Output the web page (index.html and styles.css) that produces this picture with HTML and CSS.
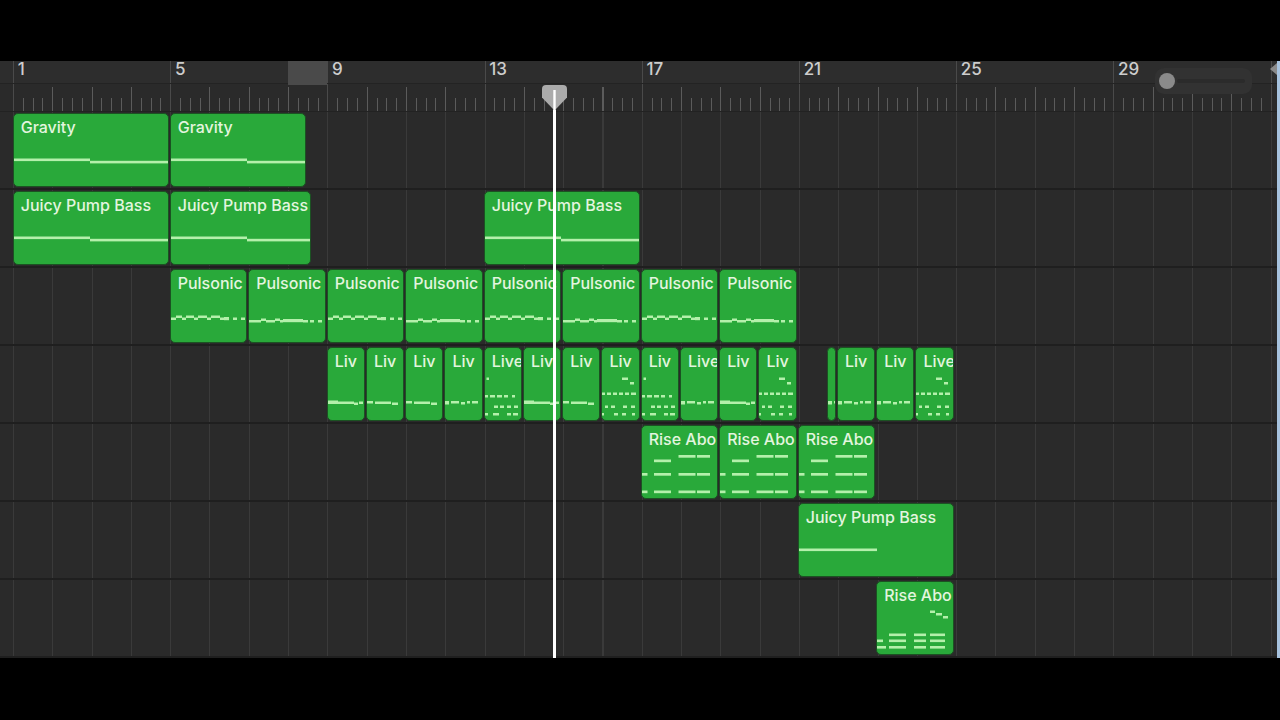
FILE: index.html
```html
<!DOCTYPE html>
<html lang="en">
  <head>
    <meta charset="UTF-8" />
    <title>Arrange</title>
    <link rel="stylesheet" href="styles.css">
  </head>
  <body>
    <!-- note patterns, reused by every region -->
    <svg class="sprites" width="0" height="0">
      <defs>
        <g id="n-bass">
          <rect x="0" y="44.5" width="76" height="2.6"/>
          <rect x="76" y="46.8" width="90" height="2.6"/>
        </g>
        <g id="n-bass-half">
          <rect x="0" y="44.5" width="78" height="2.6"/>
        </g>
        <g id="n-puls-a">
          <rect x="0" y="47.5" width="5" height="2.5"/>
          <rect x="5" y="45.5" width="6" height="2.5"/>
          <rect x="11" y="47.5" width="4" height="2.5"/>
          <rect x="15" y="45.5" width="8" height="2.5"/>
          <rect x="23" y="47.5" width="4" height="2.5"/>
          <rect x="27" y="45.5" width="9" height="2.5"/>
          <rect x="36" y="47.5" width="4" height="2.5"/>
          <rect x="40" y="45.5" width="9" height="2.5"/>
          <rect x="49" y="47.5" width="4" height="2.5"/>
          <rect x="53" y="47" width="5" height="3.2"/>
          <rect x="62" y="47.5" width="4" height="2.5"/>
          <rect x="70" y="47.5" width="4" height="2.5"/>
        </g>
        <g id="n-puls-b">
          <rect x="0" y="50" width="12" height="2.5"/>
          <rect x="12" y="48.5" width="5" height="2.5"/>
          <rect x="17" y="50" width="9" height="2.5"/>
          <rect x="26" y="48.5" width="5" height="2.5"/>
          <rect x="31" y="50" width="3" height="2.5"/>
          <rect x="34" y="49" width="20" height="3.2"/>
          <rect x="54" y="50" width="5" height="2.5"/>
          <rect x="61" y="50" width="4" height="2.5"/>
          <rect x="69" y="50" width="4" height="2.5"/>
        </g>
        <g id="n-liv-a">
          <rect x="0" y="52.5" width="10" height="3.5"/>
          <rect x="10" y="53.5" width="16" height="2.5"/>
          <rect x="26" y="54.5" width="4" height="2.5"/>
          <rect x="31" y="53.5" width="4" height="2.5"/>
        </g>
        <g id="n-liv-b">
          <rect x="0" y="53" width="4" height="3.5"/>
          <rect x="6" y="53" width="8" height="2.5"/>
          <rect x="16" y="54" width="4" height="2.5"/>
          <rect x="22" y="53" width="3" height="2.5"/>
          <rect x="27" y="53" width="6" height="2.5"/>
        </g>
        <g id="n-liv-c">
          <rect x="0" y="53" width="6" height="2.5"/>
          <rect x="8" y="53.5" width="16" height="2.5"/>
          <rect x="25" y="54.5" width="6" height="2.5"/>
        </g>
        <g id="n-multi-a">
          <rect x="1.5" y="29.5" width="2.5" height="2.5"/>
          <rect x="0" y="47" width="3" height="2.5"/>
          <rect x="5" y="47" width="5" height="2.5"/>
          <rect x="12" y="47" width="5" height="2.5"/>
          <rect x="19" y="47" width="4" height="2.5"/>
          <rect x="27" y="47" width="3" height="2.5"/>
          <rect x="9" y="57.5" width="4" height="2.5"/>
          <rect x="15" y="57.5" width="4" height="2.5"/>
          <rect x="22" y="57.5" width="4" height="2.5"/>
          <rect x="29" y="57.5" width="4" height="2.5"/>
          <rect x="0" y="65" width="3" height="2.5"/>
          <rect x="8" y="65" width="6" height="2.5"/>
          <rect x="22" y="65" width="4" height="2.5"/>
          <rect x="28" y="65" width="5" height="2.5"/>
        </g>
        <g id="n-multi-b">
          <rect x="20" y="29.5" width="6" height="2.5"/>
          <rect x="28" y="34" width="4" height="2.5"/>
          <rect x="0" y="44.5" width="3" height="2.5"/>
          <rect x="5" y="44.5" width="4" height="2.5"/>
          <rect x="11" y="44.5" width="4" height="2.5"/>
          <rect x="17" y="44.5" width="4" height="2.5"/>
          <rect x="23" y="44.5" width="4" height="2.5"/>
          <rect x="29" y="44.5" width="5" height="2.5"/>
          <rect x="3" y="57.5" width="3" height="2.5"/>
          <rect x="9" y="57.5" width="4" height="2.5"/>
          <rect x="21" y="57.5" width="4" height="2.5"/>
          <rect x="29" y="57.5" width="4" height="2.5"/>
          <rect x="0" y="65" width="2" height="2.5"/>
          <rect x="12" y="65" width="4" height="2.5"/>
          <rect x="20" y="65" width="4" height="2.5"/>
          <rect x="30" y="65" width="3" height="2.5"/>
        </g>
        <g id="n-rise">
          <rect x="12" y="33.5" width="17" height="2.7"/>
          <rect x="36.5" y="29" width="17" height="2.7"/>
          <rect x="55" y="29" width="13" height="2.7"/>
          <rect x="0" y="47" width="5.5" height="2.7"/>
          <rect x="12" y="47" width="17" height="2.7"/>
          <rect x="36.5" y="47" width="17" height="2.7"/>
          <rect x="55" y="47" width="13" height="2.7"/>
          <rect x="0" y="64.5" width="5.5" height="2.7"/>
          <rect x="12" y="64.5" width="17" height="2.7"/>
          <rect x="36.5" y="64.5" width="17" height="2.7"/>
          <rect x="55" y="64.5" width="13" height="2.7"/>
        </g>
        <g id="n-rise2">
          <rect x="53" y="28.5" width="5" height="2.5"/>
          <rect x="59" y="31" width="6" height="2.5"/>
          <rect x="66" y="34" width="5" height="2.5"/>
          <rect x="12" y="51.5" width="17" height="2.6"/>
          <rect x="37" y="51.5" width="12" height="2.6"/>
          <rect x="53" y="51.5" width="15" height="2.6"/>
          <rect x="0" y="57.5" width="6" height="2.6"/>
          <rect x="12" y="57.5" width="17" height="2.6"/>
          <rect x="37" y="57.5" width="12" height="2.6"/>
          <rect x="53" y="57.5" width="15" height="2.6"/>
          <rect x="0" y="64" width="9" height="2.6"/>
          <rect x="12" y="64" width="17" height="2.6"/>
          <rect x="37" y="64" width="12" height="2.6"/>
          <rect x="53" y="64" width="15" height="2.6"/>
        </g>
      </defs>
    </svg>

    <div class="screen">
      <div class="arrange">
        <div class="ruler">
          <div class="bars">
            <div class="cycle"></div>
            <span class="bar-num" style="grid-column: 1 / span 4">1</span>
            <span class="bar-num" style="grid-column: 5 / span 4">5</span>
            <span class="bar-num" style="grid-column: 9 / span 4">9</span>
            <span class="bar-num" style="grid-column: 13 / span 4">13</span>
            <span class="bar-num" style="grid-column: 17 / span 4">17</span>
            <span class="bar-num" style="grid-column: 21 / span 4">21</span>
            <span class="bar-num" style="grid-column: 25 / span 4">25</span>
            <span class="bar-num" style="grid-column: 29 / span 4">29</span>
          </div>
          <div class="ticks"></div>
        </div>

        <div class="tracks">
          <div class="track">
            <div class="region" style="grid-column: 1 / span 32"><span class="name">Gravity</span><svg class="notes"><use href="#n-bass"/></svg></div>
            <div class="region" style="grid-column: 33 / span 28"><span class="name">Gravity</span><svg class="notes"><use href="#n-bass"/></svg></div>
          </div>

          <div class="track">
            <div class="region" style="grid-column: 1 / span 32"><span class="name">Juicy Pump Bass</span><svg class="notes"><use href="#n-bass"/></svg></div>
            <div class="region" style="grid-column: 33 / span 29"><span class="name">Juicy Pump Bass</span><svg class="notes"><use href="#n-bass"/></svg></div>
            <div class="region" style="grid-column: 97 / span 32"><span class="name">Juicy Pump Bass</span><svg class="notes"><use href="#n-bass"/></svg></div>
          </div>

          <div class="track">
            <div class="region" style="grid-column: 33 / span 16"><span class="name">Pulsonic</span><svg class="notes"><use href="#n-puls-a"/></svg></div>
            <div class="region" style="grid-column: 49 / span 16"><span class="name">Pulsonic</span><svg class="notes"><use href="#n-puls-b"/></svg></div>
            <div class="region" style="grid-column: 65 / span 16"><span class="name">Pulsonic</span><svg class="notes"><use href="#n-puls-a"/></svg></div>
            <div class="region" style="grid-column: 81 / span 16"><span class="name">Pulsonic</span><svg class="notes"><use href="#n-puls-b"/></svg></div>
            <div class="region" style="grid-column: 97 / span 16"><span class="name">Pulsonic</span><svg class="notes"><use href="#n-puls-a"/></svg></div>
            <div class="region" style="grid-column: 113 / span 16"><span class="name">Pulsonic</span><svg class="notes"><use href="#n-puls-b"/></svg></div>
            <div class="region" style="grid-column: 129 / span 16"><span class="name">Pulsonic</span><svg class="notes"><use href="#n-puls-a"/></svg></div>
            <div class="region" style="grid-column: 145 / span 16"><span class="name">Pulsonic</span><svg class="notes"><use href="#n-puls-b"/></svg></div>
          </div>

          <div class="track">
            <div class="region" style="grid-column: 65 / span 8"><span class="name">Liv</span><svg class="notes"><use href="#n-liv-a"/></svg></div>
            <div class="region" style="grid-column: 73 / span 8"><span class="name">Liv</span><svg class="notes"><use href="#n-liv-c"/></svg></div>
            <div class="region" style="grid-column: 81 / span 8"><span class="name">Liv</span><svg class="notes"><use href="#n-liv-c"/></svg></div>
            <div class="region" style="grid-column: 89 / span 8"><span class="name">Liv</span><svg class="notes"><use href="#n-liv-b"/></svg></div>
            <div class="region" style="grid-column: 97 / span 8"><span class="name">Live</span><svg class="notes"><use href="#n-multi-a"/></svg></div>
            <div class="region" style="grid-column: 105 / span 8"><span class="name">Liv</span><svg class="notes"><use href="#n-liv-a"/></svg></div>
            <div class="region" style="grid-column: 113 / span 8"><span class="name">Liv</span><svg class="notes"><use href="#n-liv-c"/></svg></div>
            <div class="region" style="grid-column: 121 / span 8"><span class="name">Liv</span><svg class="notes"><use href="#n-multi-b"/></svg></div>
            <div class="region" style="grid-column: 129 / span 8"><span class="name">Liv</span><svg class="notes"><use href="#n-multi-a"/></svg></div>
            <div class="region" style="grid-column: 137 / span 8"><span class="name">Live</span><svg class="notes"><use href="#n-liv-b"/></svg></div>
            <div class="region" style="grid-column: 145 / span 8"><span class="name">Liv</span><svg class="notes"><use href="#n-liv-a"/></svg></div>
            <div class="region" style="grid-column: 153 / span 8"><span class="name">Liv</span><svg class="notes"><use href="#n-multi-b"/></svg></div>
            <div class="region" style="grid-column: 167 / span 2"><svg class="notes"><use href="#n-liv-b"/></svg></div>
            <div class="region" style="grid-column: 169 / span 8"><span class="name">Liv</span><svg class="notes"><use href="#n-liv-b"/></svg></div>
            <div class="region" style="grid-column: 177 / span 8"><span class="name">Liv</span><svg class="notes"><use href="#n-liv-b"/></svg></div>
            <div class="region" style="grid-column: 185 / span 8"><span class="name">Live</span><svg class="notes"><use href="#n-multi-b"/></svg></div>
          </div>

          <div class="track">
            <div class="region" style="grid-column: 129 / span 16"><span class="name">Rise Abo</span><svg class="notes"><use href="#n-rise"/></svg></div>
            <div class="region" style="grid-column: 145 / span 16"><span class="name">Rise Abo</span><svg class="notes"><use href="#n-rise"/></svg></div>
            <div class="region" style="grid-column: 161 / span 16"><span class="name">Rise Abo</span><svg class="notes"><use href="#n-rise"/></svg></div>
          </div>

          <div class="track">
            <div class="region" style="grid-column: 161 / span 32"><span class="name">Juicy Pump Bass</span><svg class="notes"><use href="#n-bass-half"/></svg></div>
          </div>

          <div class="track">
            <div class="region" style="grid-column: 177 / span 16"><span class="name">Rise Abo</span><svg class="notes"><use href="#n-rise2"/></svg></div>
          </div>
        </div>

        <div class="zoom-slider">
          <span class="knob"></span>
          <span class="slider-track"></span>
        </div>
        <div class="edge-marker"></div>

        <div class="playhead">
          <svg class="playhead-head" width="25" height="25" viewBox="0 0 25 25">
            <path d="M4 0 H21 Q25 0 25 4 V12.5 L14.5 23.5 Q12.5 25.5 10.5 23.5 L0 12.5 V4 Q0 0 4 0 Z" fill="#ababab"/>
            <rect x="11.3" y="5" width="2.4" height="20" fill="#fff"/>
          </svg>
          <div class="playhead-line"></div>
        </div>
      </div>
    </div>
  </body>
</html>
```

FILE: styles.css
```css
body {
  margin: 0;
  background: #000;
  font-family: Inter, "Liberation Sans", sans-serif;
  overflow: hidden;
}
.sprites {
  display: block;
  width: 0;
  height: 0;
}
.screen {
  width: 1280px;
  height: 720px;
  padding-top: 61px;
  box-sizing: border-box;
}
.arrange {
  position: relative;
  background: #2a2a2a;
  border-right: 3px solid #a7c3df;
}

/* ruler */
.bars {
  height: 23px;
  box-sizing: border-box;
  display: grid;
  grid-template-columns: repeat(32, 39.3px);
  grid-template-rows: 23px;
  padding-left: 12.7px;
  background-color: #2d2d2d;
  background-image: repeating-linear-gradient(to right, #4a4a4a 0 1px, transparent 1px 157.2px);
  background-origin: content-box;
  background-repeat: no-repeat;
  border-bottom: 1px solid #232323;
}
.cycle {
  grid-column: 8;
  grid-row: 1;
  background: #4a4a4a;
  margin-bottom: -1px;
}
.bar-num {
  grid-row: 1;
  align-self: start;
  padding-left: 5px;
  font-size: 17px;
  font-weight: 500;
  line-height: 17px;
  color: #cdcdcd;
}
.ticks {
  height: 28px;
  box-sizing: border-box;
  padding-left: 12.7px;
  background-color: #2a2a2a;
  background-image:
    repeating-linear-gradient(to right, #4a4a4a 0 1px, transparent 1px 157.2px),
    repeating-linear-gradient(to right, #5b5b5b 0 1px, transparent 1px 39.3px),
    repeating-linear-gradient(to right, #5b5b5b 0 1px, transparent 1px 9.825px);
  background-size: 100% 100%, 100% 24px, 100% 13px;
  background-position: left top, left bottom, left bottom;
  background-origin: content-box;
  background-repeat: no-repeat;
  border-bottom: 1px solid #222;
}

/* tracks */
.track {
  height: 78px;
  box-sizing: border-box;
  display: grid;
  grid-template-columns: repeat(256, 4.9125px);
  align-items: start;
  padding-left: 12.7px;
  border-bottom: 2px solid #1f1f1f;
  background-image: repeating-linear-gradient(to right, #3a3a3a 0 1px, transparent 1px 39.3px);
  background-origin: content-box;
  background-repeat: no-repeat;
}
.region {
  grid-row: 1;
  display: grid;
  height: 74px;
  margin: 1px 1px 0 0;
  box-sizing: border-box;
  border: 1px solid #1b5222;
  border-radius: 5px;
  background: #29a93a;
  overflow: hidden;
}
.region > * {
  grid-area: 1 / 1;
}
.name {
  align-self: start;
  padding: 2.5px 0 0 7px;
  font-size: 16px;
  font-weight: 500;
  line-height: 20px;
  color: #e3f5df;
  white-space: nowrap;
}
.notes {
  width: 100%;
  height: 72px;
  fill: #b4f0ab;
}

/* overlays */
.zoom-slider {
  position: absolute;
  left: 1155px;
  top: 7px;
  width: 97px;
  height: 26px;
  box-sizing: border-box;
  display: flex;
  align-items: center;
  gap: 2px;
  padding: 0 7px 0 4px;
  border-radius: 9px;
  background: #323232;
}
.knob {
  width: 16px;
  height: 16px;
  border-radius: 50%;
  background: #8a8a8a;
}
.slider-track {
  flex: 1;
  height: 4px;
  border-radius: 2px;
  background: #2b2b2b;
}
.edge-marker {
  position: absolute;
  right: 0;
  top: 2px;
  width: 0;
  height: 0;
  border-top: 6px solid transparent;
  border-bottom: 6px solid transparent;
  border-right: 7px solid #8a8a8a;
}
.playhead {
  position: absolute;
  left: 542px;
  top: 24px;
  bottom: 0;
  width: 25px;
  display: flex;
  flex-direction: column;
  align-items: center;
}
.playhead-head {
  display: block;
}
.playhead-line {
  flex: 1;
  width: 2.4px;
  margin-left: 0.1px;
  background: #fff;
}
```
